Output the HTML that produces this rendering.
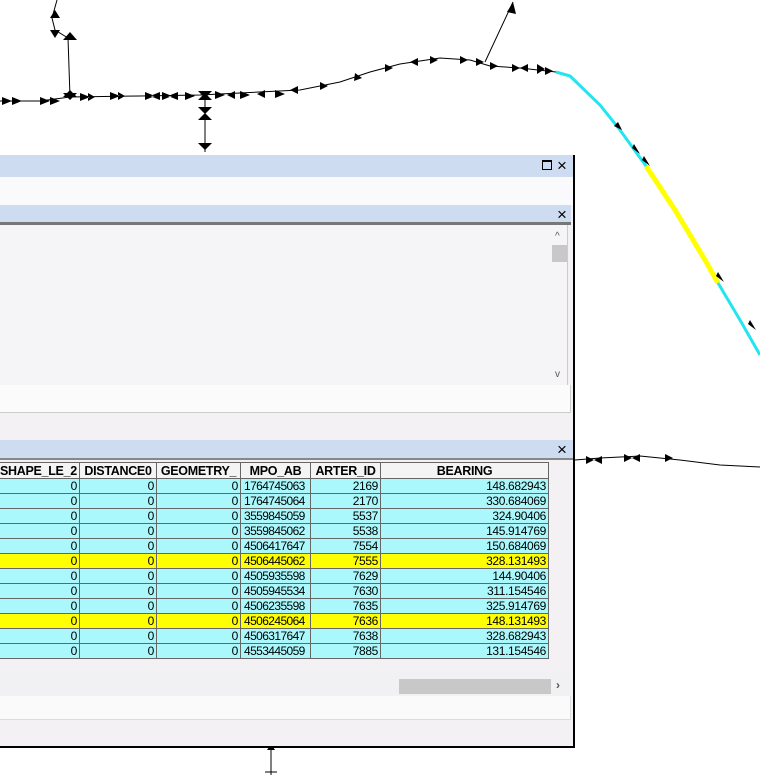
<!DOCTYPE html>
<html><head><style>
*{margin:0;padding:0;box-sizing:border-box}
body{width:760px;height:775px;background:#fff;position:relative;overflow:hidden;font-family:"Liberation Sans",Arial,sans-serif}
.a{position:absolute}
.bar{background:#cedcf2}
.x{position:absolute;font-size:17px;color:#000;line-height:13px}
.c{position:absolute;height:15px;font-size:12px;line-height:14px;text-align:right;padding-right:2px;border-right:1px solid #666;border-bottom:1px solid #666;white-space:nowrap;letter-spacing:-0.35px;overflow:hidden}
.h{font-weight:bold;font-size:12.5px;text-align:center;background:#f4f4f4;padding:0;height:17px;line-height:16px;border-top:1px solid #666;letter-spacing:-0.3px}
</style></head><body>
<svg class="a" style="left:0;top:0" width="760" height="775">
<g fill="none" stroke="#000" stroke-width="1">
<polyline points="0,101 40,101 70,97 140,96 200,95 300,90 340,82 370,72 400,64 440,58 470,60 490,66 520,68 556,72"/>
<polyline points="57,0 52,18 55,30 68,38 70,97"/>
<line x1="205" y1="95" x2="205" y2="152"/>
<polyline points="485,62 513,2"/>
<polyline points="575,460 600,458 640,456 680,460 720,465 760,467"/>
<line x1="271" y1="748" x2="271" y2="775"/>
<line x1="265" y1="772" x2="277" y2="772"/>
</g>
<polyline points="556,72 570,76 600,105 620,130 646,166 675,210 705,260 718,283 740,320 760,355" fill="none" stroke="#22e5f0" stroke-width="3"/>
<polyline points="646,166 675,210 705,260 718,283" fill="none" stroke="#ffff00" stroke-width="5"/>
<g fill="#000">
<path d="M2,97 L12,101 L2,105Z M22,101 L12,97 L12,105Z M40,97 L50,101 L40,105Z M60,101 L50,97 L50,105Z"/>
<path d="M63,93 L77,93 L70,100Z M63,97 L70,90 L77,97Z"/>
<path d="M80,93 L90,97 L80,101Z M95,97 L88,93 L88,101Z M110,92 L120,96 L110,100Z M125,96 L118,92 L118,100Z"/>
<path d="M145,92 L155,96 L145,100Z M160,92 L150,96 L160,100Z M162,92 L172,96 L162,100Z M178,92 L168,96 L178,100Z M185,92 L195,96 L185,100Z"/>
<path d="M198,91 L212,91 L205,98Z M198,100 L205,93 L212,100Z M198,107 L212,107 L205,114Z M198,120 L205,113 L212,120Z M198,143 L212,143 L205,150Z"/>
<path d="M215,91 L225,95 L215,99Z M235,91 L227,95 L235,99Z M240,91 L250,95 L240,99Z M265,90 L257,94 L265,98Z M275,90 L285,94 L275,98Z M298,86 L290,90 L298,94Z"/>
<path d="M320,82 L328,86 L320,90Z M355,73 L362,78 L354,81Z M385,64 L393,68 L385,72Z M418,58 L410,62 L418,66Z M430,56 L438,60 L430,64Z M460,56 L468,60 L460,64Z M476,58 L484,62 L476,66Z"/>
<path d="M490,62 L498,66 L490,70Z M512,64 L520,68 L512,72Z M528,64 L520,68 L528,72Z M537,64 L545,69 L537,74Z M545,67 L553,71 L545,75Z"/>
<path d="M507,12 L513,2 L516,14Z"/>
<path d="M586,456 L594,460 L586,464Z M602,456 L594,460 L602,464Z M624,454 L632,458 L624,462Z M640,454 L632,458 L640,462Z M665,454 L673,458 L665,462Z"/>
<path d="M50,18 L60,18 L55,10Z M50,30 L60,30 L55,38Z M63,40 L77,40 L70,32Z"/>
<path d="M267,750 L275,750 L271,744Z"/>
<path d="M614,126 L622,130 L618,122Z M632,148 L640,154 L634,144Z M642,160 L650,166 L644,156Z M716,276 L724,282 L718,272Z M748,324 L756,330 L750,320Z"/>
</g>
</svg>
<div class="a" style="left:0;top:155px;width:575px;height:593px;background:#f3f1f4;border-right:2px solid #000;border-bottom:2px solid #000"></div>
<div class="a bar" style="left:0;top:155px;width:573px;height:22px"></div>
<div class="a" style="left:542px;top:160px;width:10px;height:10px;border:1.5px solid #000;border-top-width:2px"></div>
<div class="x" style="left:557px;top:159px">×</div>
<div class="a" style="left:0;top:177px;width:573px;height:28px;background:#faf9fb"></div>
<div class="a bar" style="left:0;top:205px;width:571px;height:17px"></div>
<div class="x" style="left:557px;top:208px">×</div>
<div class="a" style="left:0;top:222px;width:571px;height:3px;background:#777"></div>
<div class="a" style="left:0;top:225px;width:568px;height:160px;background:#f5f4f6;border-right:1px solid #ccc"></div>
<div class="a" style="left:552px;top:245px;width:15px;height:17px;background:#c8c8c8"></div>
<div class="a" style="left:555px;top:231px;font-size:10px;color:#555">^</div>
<div class="a" style="left:555px;top:369px;font-size:10px;color:#555">v</div>
<div class="a" style="left:0;top:385px;width:571px;height:28px;background:#fbfbfc;border-bottom:1px solid #ccc;border-right:1px solid #ccc"></div>
<div class="a bar" style="left:0;top:440px;width:573px;height:18px"></div>
<div class="x" style="left:557px;top:443px">×</div>
<div class="a" style="left:0;top:458px;width:573px;height:2px;background:#888"></div>
<div class="c h" style="left:0;top:462px;width:80px;text-align:left">SHAPE_LE_2</div>
<div class="c h" style="left:80px;top:462px;width:77px">DISTANCE0</div>
<div class="c h" style="left:157px;top:462px;width:84px">GEOMETRY_</div>
<div class="c h" style="left:241px;top:462px;width:70px">MPO_AB</div>
<div class="c h" style="left:311px;top:462px;width:70px">ARTER_ID</div>
<div class="c h" style="left:381px;top:462px;width:168px">BEARING</div>
<div id="rows"></div>
<div class="a" style="left:0;top:672px;width:571px;height:23px;background:#f1f0f2"></div>
<div class="a" style="left:399px;top:679px;width:152px;height:15px;background:#c8c8c8"></div>
<div class="a" style="left:556px;top:678px;font-size:12px;font-weight:bold;color:#555">›</div>
<div class="a" style="left:0;top:696px;width:571px;height:24px;background:#fafafb;border-bottom:1px solid #ddd;border-right:1px solid #ddd"></div>
<script>
var d=[["1764745063","2169","148.682943"],["1764745064","2170","330.684069"],["3559845059","5537","324.90406"],["3559845062","5538","145.914769"],["4506417647","7554","150.684069"],["4506445062","7555","328.131493",1],["4505935598","7629","144.90406"],["4505945534","7630","311.154546"],["4506235598","7635","325.914769"],["4506245064","7636","148.131493",1],["4506317647","7638","328.682943"],["4553445059","7885","131.154546"]];
var L=[0,80,157,241,311,381],W=[80,77,84,70,70,168],h="";
d.forEach(function(r,i){var t=479+i*15,bg=r[3]?"#ffff00":"#aaf8fc",v=["0","0","0",r[0],r[1],r[2]];
for(var j=0;j<6;j++)h+='<div class="c" style="left:'+L[j]+'px;top:'+t+'px;width:'+W[j]+'px;background:'+bg+';'+(j==3?'text-align:left;padding-left:3px;letter-spacing:-0.6px':'')+'">'+v[j]+'</div>';});
document.getElementById("rows").outerHTML=h;
</script>
</body></html>
